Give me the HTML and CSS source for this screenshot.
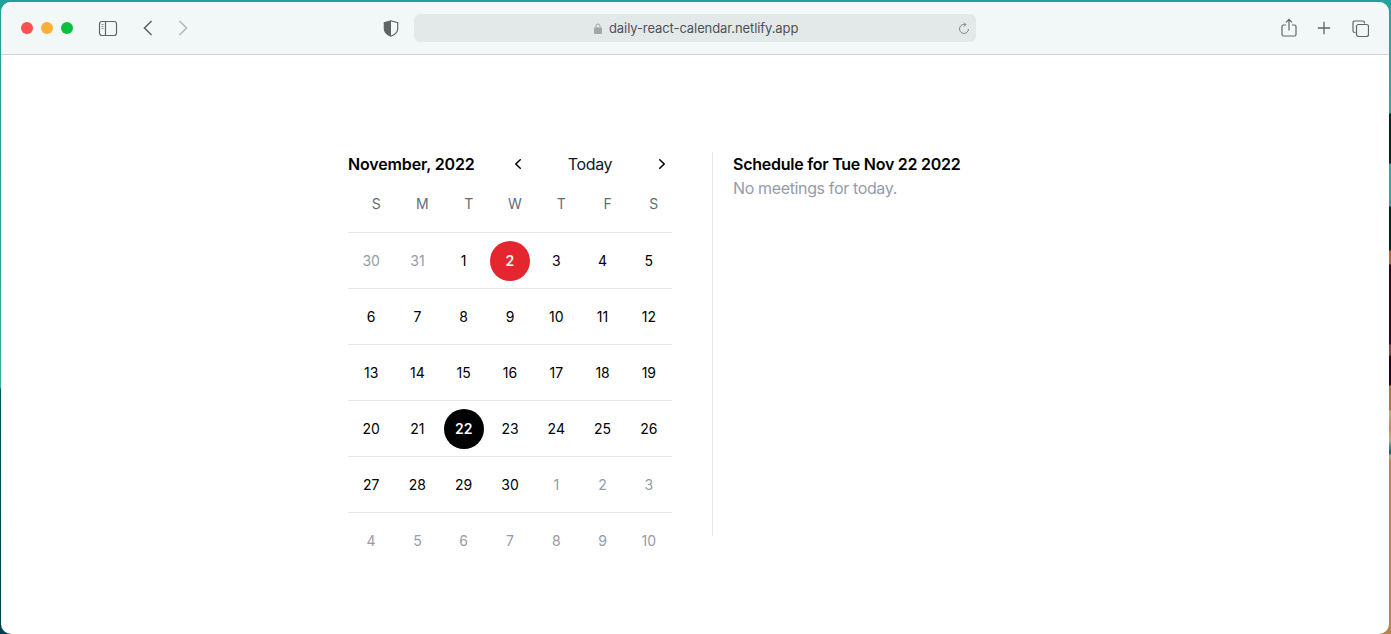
FILE: index.html
```html
<!DOCTYPE html>
<html lang="en">
<head>
  <meta charset="UTF-8" />
  <meta name="viewport" content="width=device-width, initial-scale=1.0" />
  <title>Daily React Calendar</title>
  <link rel="stylesheet" href="styles.css">
</head>
<body>
  <div class="window">
    <header class="toolbar">
      <div class="lights">
        <span class="light red"></span>
        <span class="light yellow"></span>
        <span class="light green"></span>
      </div>
      <svg class="tool sidebar-icon" width="20" height="17" viewBox="0 0 20 17" fill="none" stroke="currentColor">
        <rect x="1.5" y="1.5" width="17" height="14" rx="2.5" stroke-width="1.2"/>
        <path d="M7.5 1.5v14" stroke-width="1.2"/>
        <path d="M3.5 4.5h2M3.5 6.5h2M3.5 8.5h2" stroke-width="1" opacity=".7"/>
      </svg>
      <svg class="tool back-icon" width="12" height="18" viewBox="0 0 12 18" fill="none" stroke="currentColor" stroke-width="1.6">
        <path d="M9.5 2L2.5 9l7 7"/>
      </svg>
      <svg class="tool forward-icon" width="12" height="18" viewBox="0 0 12 18" fill="none" stroke="currentColor" stroke-width="1.6">
        <path d="M2.5 2l7 7-7 7"/>
      </svg>
      <svg class="tool shield-icon" width="16" height="17" viewBox="0 0 16 17">
        <path d="M8 .8l6.7 2v6c0 3.6-3 6-6.7 7.4C4.300 14.800 1.300 12.400 1.300 8.800v-6z" fill="none" stroke="currentColor" stroke-width="1.200"/>
        <path d="M8 .8v15.400C4.300 14.800 1.300 12.400 1.300 8.800v-6z" fill="currentColor"/>
      </svg>
      <div class="address">
        <svg class="lock" width="8" height="11" viewBox="0 0 8 11">
          <path d="M2 5V3a2 2 0 0 1 4 0v2" fill="none" stroke="#a2a6a7" stroke-width="1"/>
          <rect x="0" y="4.500" width="8" height="6.500" rx="1" fill="#a2a6a7"/>
        </svg>
        <span class="url">daily-react-calendar.netlify.app</span>
        <svg class="reload" width="12" height="13" viewBox="0 0 12 13" fill="none" stroke="#7d8384" stroke-width="1">
          <path d="M7.500 2.700A4.500 4.500 0 1 0 10.500 7"/>
          <path d="M5.800 .6l2 2-2 2"/>
        </svg>
      </div>
      <svg class="tool share-icon" width="16" height="20" viewBox="0 0 16 20" fill="none" stroke="currentColor" stroke-width="1.200">
        <path d="M5 7H2.500A1.500 1.500 0 0 0 1 8.500v8A1.500 1.500 0 0 0 2.500 18h11a1.500 1.500 0 0 0 1.500-1.500v-8A1.500 1.500 0 0 0 13.500 7H11"/>
        <path d="M8 12.500V1.500M5 4.300l3-3 3 3"/>
      </svg>
      <svg class="tool plus-icon" width="14" height="14" viewBox="0 0 14 14" fill="none" stroke="currentColor" stroke-width="1.300">
        <path d="M7 .8v12.400M.8 7h12.400"/>
      </svg>
      <svg class="tool tabs-icon" width="17" height="17" viewBox="0 0 17 17" fill="none" stroke="currentColor" stroke-width="1.200">
        <path d="M3.500 12.500H2.800A1.800 1.800 0 0 1 1 10.700V2.800A1.800 1.800 0 0 1 2.800 1h7.900a1.800 1.800 0 0 1 1.800 1.800v.7"/>
        <rect x="4.500" y="4.500" width="12" height="12" rx="2"/>
      </svg>
    </header>

    <main class="page">
      <section class="calendar">
        <div class="month-bar">
          <h2 class="month-title">November, 2022</h2>
          <button class="nav-btn" type="button">
            <svg width="20" height="20" viewBox="0 0 20 20" fill="currentColor"><path fill-rule="evenodd" clip-rule="evenodd" d="M12.790 5.230a.75.75 0 0 1-.02 1.060L8.832 10l3.938 3.710a.75.75 0 1 1-1.040 1.080l-4.500-4.250a.75.75 0 0 1 0-1.080l4.500-4.250a.75.75 0 0 1 1.060.020z"/></svg>
          </button>
          <button class="today-btn" type="button">Today</button>
          <button class="nav-btn next" type="button">
            <svg width="20" height="20" viewBox="0 0 20 20" fill="currentColor"><path fill-rule="evenodd" clip-rule="evenodd" d="M7.210 14.770a.75.75 0 0 1 .02-1.060L11.168 10 7.230 6.290a.75.75 0 1 1 1.040-1.080l4.500 4.250a.75.75 0 0 1 0 1.080l-4.500 4.250a.75.75 0 0 1-1.060-.020z"/></svg>
          </button>
        </div>

        <div class="weekdays">
          <div>S</div><div>M</div><div>T</div><div>W</div><div>T</div><div>F</div><div>S</div>
        </div>

        <div class="days">
          <div class="cell"><button class="day muted">30</button></div>
          <div class="cell"><button class="day muted">31</button></div>
          <div class="cell"><button class="day">1</button></div>
          <div class="cell"><button class="day today">2</button></div>
          <div class="cell"><button class="day">3</button></div>
          <div class="cell"><button class="day">4</button></div>
          <div class="cell"><button class="day">5</button></div>

          <div class="cell"><button class="day">6</button></div>
          <div class="cell"><button class="day">7</button></div>
          <div class="cell"><button class="day">8</button></div>
          <div class="cell"><button class="day">9</button></div>
          <div class="cell"><button class="day">10</button></div>
          <div class="cell"><button class="day">11</button></div>
          <div class="cell"><button class="day">12</button></div>

          <div class="cell"><button class="day">13</button></div>
          <div class="cell"><button class="day">14</button></div>
          <div class="cell"><button class="day">15</button></div>
          <div class="cell"><button class="day">16</button></div>
          <div class="cell"><button class="day">17</button></div>
          <div class="cell"><button class="day">18</button></div>
          <div class="cell"><button class="day">19</button></div>

          <div class="cell"><button class="day">20</button></div>
          <div class="cell"><button class="day">21</button></div>
          <div class="cell"><button class="day selected">22</button></div>
          <div class="cell"><button class="day">23</button></div>
          <div class="cell"><button class="day">24</button></div>
          <div class="cell"><button class="day">25</button></div>
          <div class="cell"><button class="day">26</button></div>

          <div class="cell"><button class="day">27</button></div>
          <div class="cell"><button class="day">28</button></div>
          <div class="cell"><button class="day">29</button></div>
          <div class="cell"><button class="day">30</button></div>
          <div class="cell"><button class="day muted">1</button></div>
          <div class="cell"><button class="day muted">2</button></div>
          <div class="cell"><button class="day muted">3</button></div>

          <div class="cell"><button class="day muted">4</button></div>
          <div class="cell"><button class="day muted">5</button></div>
          <div class="cell"><button class="day muted">6</button></div>
          <div class="cell"><button class="day muted">7</button></div>
          <div class="cell"><button class="day muted">8</button></div>
          <div class="cell"><button class="day muted">9</button></div>
          <div class="cell"><button class="day muted">10</button></div>
        </div>
      </section>

      <section class="schedule">
        <h2 class="schedule-title">Schedule for Tue Nov 22 2022</h2>
        <p class="schedule-empty">No meetings for today.</p>
      </section>
    </main>
  </div>
</body>
</html>
```

FILE: styles.css
```css
/* === Desktop wallpaper showing round the window === */
html,body{height:100%}
body{
  margin:0;
  overflow:hidden;
  box-sizing:border-box;
  padding:2px 2px 0 1px;
  font-family:Inter,"Liberation Sans",sans-serif;
  background-color:#1f9f9b;
  background-repeat:no-repeat;
  background-position:left top,right top;
  background-size:12px 100%,12px 100%;
  background-image:
    linear-gradient(to bottom,#22a09c 0,#2c9c98 200px,#37ae9a 388px,#04585d 389px,#03404f 100%),
    linear-gradient(to bottom,#22a39f 0,#2aa8a3 113px,#02261d 114px,#02261d 163px,#2aa8a3 164px,#2aa8a3 206px,#02261d 207px,#02261d 250px,#b0653c 251px,#b0653c 264px,#2a0a1a 265px,#2a0a1a 344px,#7a4a4a 345px,#7a4a4a 355px,#240618 356px,#240618 385px,#b2743c 386px,#b2743c 410px,#b8ae90 411px,#b88f55 428px,#b8ae90 440px,#0c6f70 451px,#0c6f70 454px,#b8ae90 455px,#b5854d 462px,#b5854d 100%);
}

/* === Browser window === */
.window{
  height:100%;
  display:flex;
  flex-direction:column;
  background:#fff;
  border-radius:10px;
  overflow:hidden;
}

/* === Toolbar === */
.toolbar{
  flex:none;
  height:53px;
  box-sizing:border-box;
  border-bottom:1px solid #d2d3d3;
  background:#f2f8f8;
  display:flex;
  align-items:center;
  padding-left:20px;
  color:#5f6566;
}
.lights{display:flex;gap:8px}
.light{width:12px;height:12px;border-radius:50%}
.light.red{background:#fe4e50}
.light.yellow{background:#fdae36}
.light.green{background:#09c13f}
.tool{flex:none}
.sidebar-icon{margin-left:25px}
.back-icon{margin-left:24px}
.forward-icon{margin-left:23px;color:#b4b8b9}
.shield-icon{margin-left:194px}
.address{
  flex:none;
  margin-left:15px;
  width:562px;
  height:28px;
  box-sizing:border-box;
  border-radius:6px;
  background:#e3e8e8;
  display:flex;
  align-items:center;
  padding-left:180px;
  position:relative;
  font-size:13px;
  letter-spacing:-.09px;
  color:#4e5354;
}
.lock{margin-right:7px}
.url{white-space:nowrap}
.reload{position:absolute;right:6px;top:8px}
.share-icon{margin-left:305px}
.plus-icon{margin-left:20px}
.tabs-icon{margin-left:21px}

/* === Page layout === */
.page{
  flex:1;
  display:flex;
  align-items:flex-start;
  padding:97px 0 0 347px;
}
.calendar{width:324px;flex:none;margin-right:40px}
.schedule{
  width:300px;
  height:384px;
  border-left:1px solid #e5e7eb;
  padding-left:20px;
}
.schedule-title{margin:0;font-size:16px;line-height:24px;font-weight:600;letter-spacing:-.25px;color:#000}
.schedule-empty{margin:0;font-size:16px;line-height:24px;letter-spacing:-.36px;color:#949ca9}

/* === Month header === */
.month-bar{display:flex;align-items:center;height:24px}
.month-title{flex:1;margin:0;font-size:16px;line-height:24px;font-weight:600;letter-spacing:-.15px;color:#000}
button{font-family:inherit;border:none;background:none;padding:0;cursor:pointer}
.nav-btn{width:32px;height:32px;display:flex;align-items:center;justify-content:center;color:#000}
.nav-btn.next{margin-right:-6px}
.today-btn{width:112px;font-size:16px;line-height:24px;letter-spacing:-.35px;color:#111827}

/* === Weekdays === */
.weekdays{
  display:grid;
  grid-template-columns:repeat(7,1fr);
  margin:18px -5px 18px 5px;
  font-size:14px;
  line-height:20px;
  text-align:center;
  color:#646c7b;
}

/* === Day grid === */
.days{display:grid;grid-template-columns:repeat(7,1fr)}
.cell{
  height:56px;
  box-sizing:border-box;
  border-top:1px solid #e5e7eb;
  padding-top:8px;
  display:flex;
  justify-content:center;
}
.day{
  width:40px;
  height:40px;
  border-radius:50%;
  font-size:14px;
  line-height:20px;
  color:#000;
}
.day.muted{color:#949ca9}
.day.today{background:#e4262e;color:#fff;font-weight:600}
.day.selected{background:#000;color:#fff;font-weight:600}
```
